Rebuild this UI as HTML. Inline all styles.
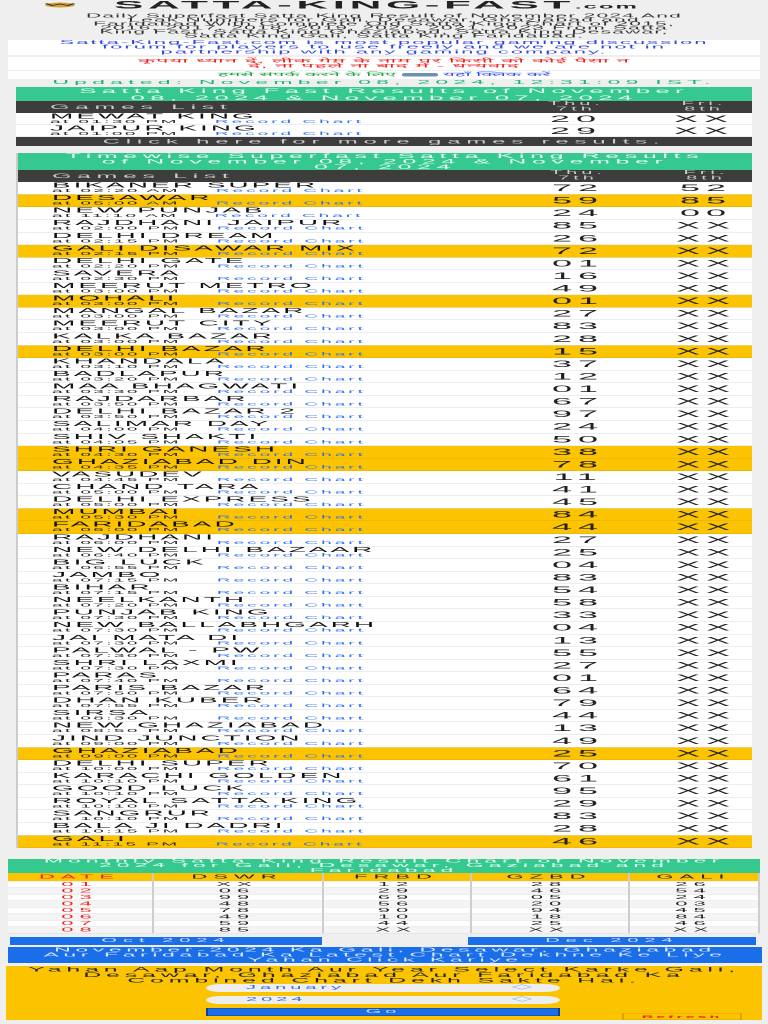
<!DOCTYPE html>
<html><head><meta charset="utf-8"><style>
*{margin:0;padding:0;box-sizing:border-box}
html,body{width:768px;height:1024px;overflow:hidden;background:#efefef}
#w{position:absolute;left:0;top:0;width:384px;height:2048px;transform:scale(2,0.5);transform-origin:0 0;font-family:"Liberation Sans","Noto Sans CJK SC",sans-serif;}
.a{position:absolute}
.c{text-align:center;white-space:nowrap}
.intro{left:0;width:384px;top:29px;font-size:10.5px;line-height:7.9px;color:#333;letter-spacing:.6px}
.box{background:#fff;left:4px;width:376px}
.g{background:#35c98f;color:#e8fff5}
.d{background:#3d3d3d;color:#ccc}
.row{position:relative;height:24px;background:#fff;border-bottom:1px solid #ddd;overflow:hidden}
.y{background:#fcc400;border-bottom-color:#e0ae00}
.nm{position:absolute;left:17px;top:-1px;font-size:14px;line-height:14px;letter-spacing:1.5px;color:#111;white-space:nowrap}
.tm{position:absolute;left:17px;top:12px;font-size:9.5px;line-height:11px;letter-spacing:1.2px;color:#222;white-space:nowrap}
.tm b{font-weight:normal;color:#2d6ff0;margin-left:18px;letter-spacing:1.5px}
.n1,.n2{position:absolute;top:3px;font-size:18px;line-height:18px;letter-spacing:3px;color:#222;width:60px;text-align:center}
.n1{left:250px}.n2{left:314px}
.hd{position:relative;height:24px}
.hd .l{position:absolute;left:17px;top:5px;font-size:12.5px;letter-spacing:2.8px}
.hd .t{position:absolute;top:1px;font-size:10px;line-height:10.5px;letter-spacing:2px;text-align:center;width:60px}
table{border-collapse:collapse;width:100%}
td{font-size:11px;line-height:12px;height:13px;text-align:center;letter-spacing:3px;border-right:1px solid #ccc;border-bottom:1px solid #ddd;color:#222}
</style></head><body><div id="w">
<div class="a" style="left:22px;top:1px;width:16px;height:16px"><svg width="16" height="16" viewBox="0 0 16 16"><ellipse cx="8" cy="9" rx="7.5" ry="5" fill="#d9a030"/><path d="M1 6 L4 10 L8 7 L12 10 L15 6" stroke="#333" stroke-width="1.5" fill="none"/></svg></div>
<div class="a" style="left:57px;top:-2px;font-size:22px;line-height:24px;letter-spacing:2.3px;font-weight:bold;color:#222;white-space:nowrap">SATTA-KING-FAST<span style="font-size:12px;letter-spacing:1px">.com</span></div>
<div class="a intro c">Daily Superfast Satta King Result of November 2024 And<br>Leak Numbers for Gali, Desawar, Ghaziabad and<br>Faridabad With Complete Old Satta King Chart of 2015,<br>2016, 2017, 2018, 2019, 2020, 2021, 2023 From Satta<br>King Fast, Satta King Ghaziabad, Satta King Desawar,<br>Satta King Gali, Satta King Faridabad.</div>
<div class="a box c" style="top:80px;height:30px;padding-top:1px;font-size:11px;line-height:9.4px;letter-spacing:1px;color:#3046e0">Satta-King-Fast.com is most popular gaming discussion<br>forum for players to use freely and we are not in<br>partnership with any gaming company.</div>
<div class="a box c" style="top:114px;height:26px;padding-top:3px;font-size:11px;line-height:10px;letter-spacing:.5px;color:#f01818">कृपया ध्यान दें, लीक गेम के नाम पर किसी को कोई पैसा न<br>दें, ना पहले ना बाद में - धन्यवाद</div>
<div class="a box c" style="top:142px;height:16px;padding-top:2px;font-size:10px;line-height:11px;color:#1aa040">हमसे संपर्क करने के लिए <span style="display:inline-block;width:18px;height:7px;background:#6c8fb5;border-radius:2px;vertical-align:middle"></span> <span style="color:#2d4ee8">यहाँ क्लिक करें</span></div>
<div class="a c" style="top:159px;left:0;width:384px;font-size:11.5px;line-height:12px;letter-spacing:2.6px;color:#1fb27a">Updated: November 08, 2024, 12:31:09 IST.</div>

<div class="a" style="left:8px;width:368px;top:174px">
<div class="g c" style="height:28px;font-size:13px;line-height:13.5px;letter-spacing:2.6px;padding-top:1px;overflow:hidden">Satta King Fast Results of November<br>08, 2024 &amp; November 07, 2024</div>
<div class="d hd"><span class="l">Games List</span><span class="t" style="left:250px">Thu.<br>7th</span><span class="t" style="left:314px">Fri.<br>8th</span></div>
<div class="row"><span class="nm">MEWAT KING</span><span class="tm">at 01:30 PM<b>Record Chart</b></span><span class="n1">20</span><span class="n2">XX</span></div>
<div class="row"><span class="nm">JAIPUR KING</span><span class="tm">at 01:00 PM<b>Record Chart</b></span><span class="n1">29</span><span class="n2">XX</span></div>
<div class="d c" style="height:18px;font-size:12px;line-height:18px;letter-spacing:2.9px">Click here for more games results.</div>
</div>

<div class="a" style="left:8px;width:368px;top:306px;border-left:1px solid #ccc">
<div class="g c" style="height:34px;font-size:12.5px;line-height:11px;letter-spacing:2.8px;padding-top:1px;overflow:hidden">Timewise Superfast Satta King Results<br>of November 08, 2024 &amp; November<br>07, 2024</div>
<div class="d hd"><span class="l">Games List</span><span class="t" style="left:250px">Thu.<br>7th</span><span class="t" style="left:314px">Fri.<br>8th</span></div>
<div id="rows"></div>
</div>

<div class="a" style="left:4px;width:376px;top:1718px">
<div class="g c" style="height:28px;font-size:11.5px;line-height:9.3px;letter-spacing:2.5px">Monthly Satta King Result Chart of November<br>2024 for Gali, Desawar, Gaziabad and<br>Faridabad</div>
<table><tr style="background:#fcc400"><td style="color:#f02020;height:16px">DATE</td><td>DSWR</td><td>FRBD</td><td>GZBD</td><td>GALI</td></tr>
<tbody id="mt"></tbody></table>
</div>
<div class="a c" style="left:5px;width:156px;top:1874px;height:16px;background:#1a6ee8;color:#cfe0ff;font-size:10px;line-height:16px;letter-spacing:3px">Oct 2024</div>
<div class="a c" style="left:234px;width:144px;top:1874px;height:16px;background:#1a6ee8;color:#cfe0ff;font-size:10px;line-height:16px;letter-spacing:3px">Dec 2024</div>
<div class="a c" style="left:4px;width:377px;top:1894px;height:32px;background:#1a6ee8;color:#dde9ff;font-size:11.5px;line-height:10px;letter-spacing:2.3px;padding-top:1px">November-2024 Ka Gali, Desawar, Ghaziabad<br>Aur Faridabad Ka Latest Chart Dekhne Ke Liye<br>Yahan Click Kariye</div>
<div class="a c" style="left:3px;width:378px;top:1932px;height:108px;background:#fcc400;font-size:12.5px;line-height:11px;letter-spacing:2.4px;color:#222;padding-top:2px">Yahan Aap Month Aur Year Select Karke Gali,<br>Desawar, Ghaziabad Aur Faridabad Ka<br>Combined Chart Dekh Sakte Hai.</div>
<div class="a" style="left:103px;width:177px;top:1968px;height:16px;background:#eee;border-radius:8px;font-size:10px;line-height:16px;letter-spacing:2px;color:#2a6ee8;padding-left:20px">January<span style="position:absolute;right:12px">◇</span></div>
<div class="a" style="left:103px;width:177px;top:1992px;height:16px;background:#eee;border-radius:8px;font-size:10px;line-height:16px;letter-spacing:2px;color:#2a6ee8;padding-left:20px">2024<span style="position:absolute;right:12px">◇</span></div>
<div class="a c" style="left:103px;width:177px;top:2016px;height:16px;background:#1a6ee8;border:1px solid #0a3f9a;color:#cfe0ff;font-size:10px;line-height:14px;letter-spacing:2px">Go</div>
<div class="a c" style="left:311px;width:60px;top:2026px;height:14px;border:1px solid #e0a000;color:#f02020;font-size:8px;line-height:14px;letter-spacing:1.5px;font-weight:bold">Refresh</div>
</div>
<script>
var R=[["BIKANER SUPER","02:20 AM","72","52"],["DESAWAR","05:00 AM","59","85",1],["NEW PUNJAB","11:10 AM","24","00"],["RAJDHANI JAIPUR","02:00 PM","85","XX"],["DELHI DREAM","02:15 PM","26","XX"],["GALI DISAWAR MIX","02:15 PM","72","XX",1],["DELHI GATE","02:20 PM","01","XX"],["SAVERA","02:30 PM","16","XX"],["MEERUT METRO","03:00 PM","49","XX"],["MOHALI","03:00 PM","01","XX",1],["MANGAL BAZAR","03:00 PM","27","XX"],["MEERUT CITY","03:00 PM","83","XX"],["KALKA BAZAR","03:00 PM","28","XX"],["DELHI BAZAR","03:00 PM","15","XX",1],["KHANDALA","03:10 PM","37","XX"],["BADLAPUR","03:20 PM","12","XX"],["MAA BHAGWATI","03:30 PM","01","XX"],["RAJDARBAR","03:50 PM","67","XX"],["DELHI BAZAR 2","03:50 PM","97","XX"],["SALIMAR DAY","04:00 PM","24","XX"],["SHIV SHAKTI","04:05 PM","50","XX"],["SHRI GANESH","04:30 PM","38","XX",1],["GHAZIABAD DIN","04:35 PM","78","XX",1],["VASUDEV","04:45 PM","11","XX"],["CHAND TARA","05:00 PM","41","XX"],["DELHI EXPRESS","05:00 PM","45","XX"],["MUMBAI","05:30 PM","84","XX",1],["FARIDABAD","06:00 PM","44","XX",1],["RAJDHANI","06:00 PM","27","XX"],["NEW DELHI BAZAAR","06:40 PM","25","XX"],["BIG LUCK","06:55 PM","04","XX"],["JAMBO","07:15 PM","83","XX"],["BIHAR","07:15 PM","54","XX"],["NEELKANTH","07:20 PM","58","XX"],["PUNJAB KING","07:30 PM","33","XX"],["NEW BALLABHGARH","07:30 PM","04","XX"],["JAI MATA DI","07:30 PM","13","XX"],["PALWAL - PW","07:30 PM","55","XX"],["SHRI LAXMI","07:30 PM","27","XX"],["PARAS","07:40 PM","01","XX"],["PARIS BAZAR","07:50 PM","64","XX"],["DHAN KUBER","07:55 PM","79","XX"],["SIRSA","08:30 PM","44","XX"],["NEW GHAZIABAD","08:50 PM","13","XX"],["JIND JUNCTION","09:00 PM","49","XX"],["GHAZIABAD","09:00 PM","25","XX",1],["DELHI SUPER","10:00 PM","70","XX"],["KARACHI GOLDEN","10:10 PM","61","XX"],["GOOD LUCK","10:10 PM","95","XX"],["ROYAL SATTA KING","10:10 PM","29","XX"],["SANGRUR","10:10 PM","83","XX"],["BALA JI DADRI","10:15 PM","28","XX"],["GALI","11:15 PM","46","XX",1]];
var h="";R.forEach(function(r){h+='<div class="row'+(r[4]?' y':'')+'" style="height:25.13px"><span class="nm">'+r[0]+'</span><span class="tm">at '+r[1]+'<b>Record Chart</b></span><span class="n1">'+r[2]+'</span><span class="n2">'+r[3]+'</span></div>';});
document.getElementById("rows").innerHTML=h;
var M=[["01","XX","12","28","26"],["02","06","29","46","54"],["03","99","69","05","24"],["04","48","56","20","03"],["05","78","90","94","45"],["06","49","10","18","84"],["07","59","44","25","46"],["08","85","XX","XX","XX"]];
var t="";M.forEach(function(m,i){t+='<tr style="background:'+(i%2?'#f4f4f4':'#fff')+'"><td style="color:#f02020;width:72px">'+m[0]+'</td><td style="width:85px">'+m[1]+'</td><td style="width:74px">'+m[2]+'</td><td style="width:79px">'+m[3]+'</td><td>'+m[4]+'</td></tr>';});
document.getElementById("mt").innerHTML=t;
</script>
</body></html>
